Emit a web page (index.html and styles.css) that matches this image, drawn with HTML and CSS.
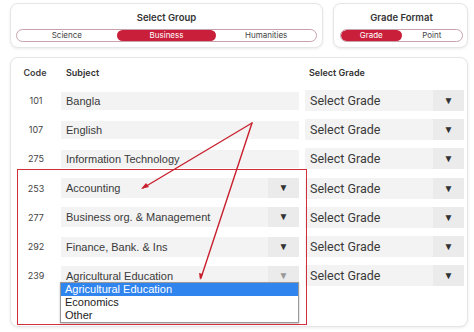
FILE: index.html
```html
<!DOCTYPE html>
<html>
<head>
<meta charset="utf-8">
<link rel="stylesheet" href="styles.css">
</head>
<body>
<div class="page">
  <div class="top">
    <div class="card group">
      <div class="title">Select Group</div>
      <div class="seg seg3">
        <span>Science</span><span class="on">Business</span><span>Humanities</span>
      </div>
    </div>
    <div class="card format">
      <div class="title">Grade Format</div>
      <div class="seg seg2">
        <span class="on">Grade</span><span>Point</span>
      </div>
    </div>
  </div>
  <div class="card main">
    <div class="grid">
      <div class="hd code">Code</div><div class="hd subj">Subject</div><div class="hd grade">Select Grade</div>

      <div class="code">101</div><div class="field">Bangla</div><div class="gsel">Select Grade<span class="dd">▼</span></div>
      <div class="code">107</div><div class="field">English</div><div class="gsel">Select Grade<span class="dd">▼</span></div>
      <div class="code">275</div><div class="field">Information Technology</div><div class="gsel">Select Grade<span class="dd">▼</span></div>
      <div class="code">253</div><div class="field sel">Accounting<span class="dd">▼</span></div><div class="gsel">Select Grade<span class="dd">▼</span></div>
      <div class="code">277</div><div class="field sel">Business org. &amp; Management<span class="dd">▼</span></div><div class="gsel">Select Grade<span class="dd">▼</span></div>
      <div class="code">292</div><div class="field sel">Finance, Bank. &amp; Ins<span class="dd">▼</span></div><div class="gsel">Select Grade<span class="dd">▼</span></div>
      <div class="code">239</div>
      <div class="field sel open">Agricultural Education<span class="dd faded">▼</span>
        <div class="list">
          <div class="opt hi">Agricultural Education</div>
          <div class="opt">Economics</div>
          <div class="opt">Other</div>
        </div>
      </div>
      <div class="gsel">Select Grade<span class="dd">▼</span></div>
    </div>
  </div>
  <div class="redbox"></div>
  <svg class="arrows" width="474" height="332" viewBox="0 0 474 332">
    <g stroke="#c9202f" stroke-width="1.4" fill="none" stroke-linecap="round">
      <line x1="252" y1="123" x2="143" y2="188"/>
      <line x1="252" y1="123" x2="201" y2="278"/>
    </g>
    <g fill="#c9202f">
      <polygon points="141,189 146,183 149,187"/>
      <polygon points="200,280 199,273 203,274"/>
    </g>
  </svg>
</div>
</body>
</html>
```
FILE: styles.css
```css
* { box-sizing: border-box; }
html, body { margin: 0; padding: 0; background: #fff; }
body { width: 474px; height: 332px; overflow: hidden; font-family: "Liberation Sans", Arial, sans-serif; color: #333; }
.page { position: relative; width: 474px; height: 332px; padding: 3px 6px 0 10px; }
.top { display: flex; gap: 10px; }
.card { background: #fff; border: 1px solid #e6e6e6; border-radius: 8px; box-shadow: 0 1px 3px rgba(0,0,0,0.08); }
.group { width: 313px; height: 45px; padding: 0 5px; }
.format { width: 135px; height: 45px; padding: 0 4px 0 6px; }
.title { font-family: "Inter", "Liberation Sans", sans-serif; font-weight: 600; font-size: 9.5px; color: #333; text-align: center; height: 25px; line-height: 27px; }
.seg { display: flex; height: 13px; border: 1px solid #c7a2aa; border-radius: 7px; overflow: hidden; }
.seg span { flex: 1; text-align: center; font-family: "Inter", "Liberation Sans", sans-serif; font-size: 8px; line-height: 11px; color: #444; }
.seg span.on { background: #c91f3b; color: #fff; border-radius: 7px; }
.main { margin-top: 9px; width: 458px; height: 270px; position: relative; }
.grid { display: grid; grid-template-columns: 44px 238px 159px; column-gap: 6px; grid-auto-rows: 29.2px; grid-template-rows: 28px; align-items: center; }
.hd { font-family: "Inter", "Liberation Sans", sans-serif; font-weight: 600; font-size: 9px; color: #333; align-self: center; padding-top: 1px; }
.hd.subj { padding-left: 5px; }
.hd.grade { padding-left: 4px; }
.code { font-family: "Inter", "Liberation Sans", sans-serif; font-size: 9px; color: #444; text-align: center; padding-left: 6px; }
.hd.code { text-align: center; padding-left: 4px; }
.field { height: 18px; background: #f3f3f3; font-size: 11px; line-height: 18px; padding-left: 5px; position: relative; display: flex; align-items: center; white-space: nowrap; color: #3a3a3a; }
.field.sel { height: 20px; }
.dd { margin-left: auto; width: 31px; height: 100%; background: #ebebeb; font-size: 10px; display: flex; align-items: center; justify-content: center; color: #333; }
.dd.faded { color: #999; }
.gsel { height: 21px; background: #f3f3f3; font-family: "Roboto", "Liberation Sans", sans-serif; font-size: 12.5px; padding-left: 5px; display: flex; align-items: center; color: #3a3a3a; }
.gsel .dd { width: 31px; font-family: "Liberation Sans", sans-serif; }
.list { position: absolute; left: -1px; top: 16px; width: 239px; background: #fff; border: 1px solid #999; box-shadow: 0 1px 2px rgba(0,0,0,0.25); z-index: 2; }
.opt { font-size: 11px; line-height: 13px; height: 13px; padding-left: 4px; color: #222; overflow: hidden; }
.opt.hi { background: #2f84ee; color: #fff; }
.redbox { position: absolute; left: 17px; top: 169px; width: 290px; height: 156px; border: 1.5px solid #d0303c; z-index: 3; pointer-events: none; }
.arrows { position: absolute; left: 0; top: 0; z-index: 4; }
```
